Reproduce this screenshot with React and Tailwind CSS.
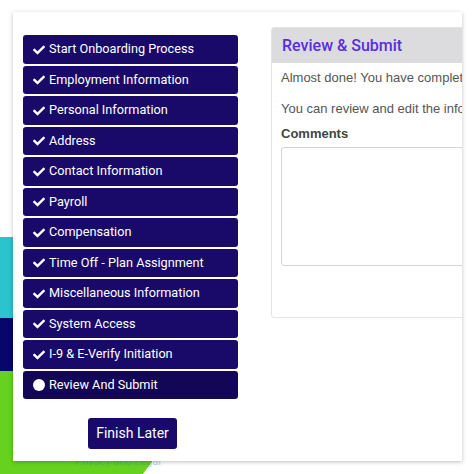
import React from 'react';
import { FaCheck } from 'react-icons/fa';

const steps = [
    'Start Onboarding Process',
    'Employment Information',
    'Personal Information',
    'Address',
    'Contact Information',
    'Payroll',
    'Compensation',
    'Time Off - Plan Assignment',
    'Miscellaneous Information',
    'System Access',
    'I-9 & E-Verify Initiation',
    'Review And Submit'
];

const StepItem = ({ label, done }) => (
    <div
        className={`flex items-center h-[28.5px] pl-[10px] pt-[1px] gap-[4px] rounded-[3px] text-white text-[12.7px] ${
            done ? 'bg-[#190a6a]' : 'bg-[#140656]'
        }`}
    >
        {done ? (
            <FaCheck className="w-[12px] h-[12px] shrink-0" />
        ) : (
            <span className="w-[12px] h-[12px] rounded-full bg-white shrink-0" />
        )}
        <span className="leading-none">{label}</span>
    </div>
);

const App = () => {
    return (
        <div className="relative w-[474px] h-[474px] overflow-hidden bg-white font-['Roboto',sans-serif]">
            {/* background shapes behind the card */}
            <div className="absolute left-0 top-[237px] w-[40px] h-[81px] bg-[#2bc3cc]" />
            <div className="absolute left-0 top-[318px] w-[40px] h-[53px] bg-[#06066b]" />
            <div className="absolute left-0 top-[371px] w-[152px] h-[103px] bg-[#66d11e] [clip-path:polygon(0_0,100%_0,100%_88%,94%_100%,0_100%)]" />
            <div className="absolute left-[75px] top-[454px] text-[11px] text-[#3a9aa0] opacity-40">Privacy and Legal</div>

            <div className="relative z-10 ml-[13px] mt-[12px] w-[449px] h-[449px] bg-white shadow-[0_1px_4px_rgba(0,0,0,0.25)] overflow-hidden flex">
                <div className="w-[225px] pl-[10px] pt-[23px] shrink-0 flex flex-col">
                    <div className="flex flex-col gap-[2px]">
                        {steps.map((s, i) => (
                            <StepItem key={s} label={s} done={i < steps.length - 1} />
                        ))}
                    </div>
                    <div className="flex justify-center mt-[18.5px] pl-[4px]">
                        <button className="w-[89px] h-[31px] rounded-[3px] bg-[#190a6a] text-white text-[14px]">
                            Finish Later
                        </button>
                    </div>
                </div>

                <div className="pl-[33px] pt-[15px] shrink-0">
                    <div className="w-[300px] border border-[#e4e4e4] rounded-[3px] font-['Liberation_Sans',sans-serif]">
                        <div className="h-[35px] bg-[#dcdcdf] px-[10px] flex items-center">
                            <span className="text-[16px] font-medium text-[#5a2de3] font-['Roboto',sans-serif]">Review &amp; Submit</span>
                        </div>
                        <div className="px-[9px] pt-[5px] pb-[51px] text-[13px] text-[#555]">
                            <p className="leading-[20px] whitespace-nowrap">Almost done! You have completed all the steps.</p>
                            <p className="leading-[20px] mt-[11px] whitespace-nowrap">You can review and edit the information before submitting.</p>
                            <p className="leading-[20px] mt-[5px] font-bold text-[#444]">Comments</p>
                            <textarea className="mt-[3px] w-full h-[119px] border border-[#d4d4d4] rounded-[3px] resize-none block" />
                        </div>
                    </div>
                </div>
            </div>
        </div>
    );
};

export default App;
